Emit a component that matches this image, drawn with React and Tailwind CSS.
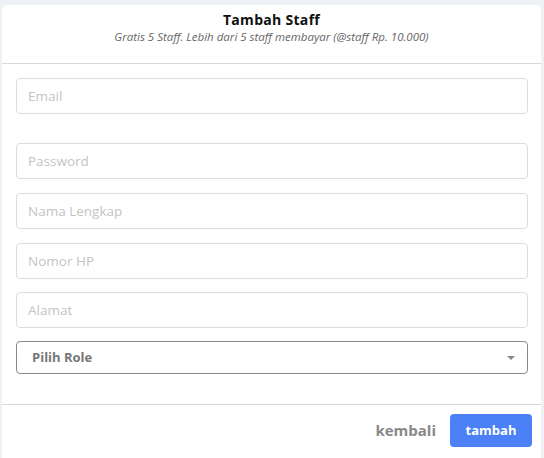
import React from "react";

const inputCls =
  "w-full h-[36px] rounded-[4px] border border-[#dcdcdc] bg-white px-[11px] text-[13.5px] text-[#333] placeholder:text-[#c4c4c4] outline-none";

export default function App() {
  return (
    <div
      className="min-h-screen bg-[#eef1f5] pl-[2px] pr-[3px] pt-[5px]"
      style={{ fontFamily: '"Open Sans", "Liberation Sans", sans-serif' }}
    >
      <div className="min-h-[460px] rounded-t-[5px] bg-white">
        <div className="flex h-[58px] flex-col items-center pt-[6px]">
          <div className="text-[14px] font-bold leading-[18px] tracking-[0.3px] text-[#111]">Tambah Staff</div>
          <div className="text-[11.5px] italic leading-[15px] text-[#666]">
            Gratis 5 Staff. Lebih dari 5 staff membayar (@staff Rp. 10.000)
          </div>
        </div>
        <div className="h-px bg-[#d9d9d9]" />
        <div className="flex flex-col pl-[14px] pr-[13px] pt-[14px]">
          <input className={inputCls + " mb-[29px]"} placeholder="Email" />
          <input className={inputCls + " mb-[14px]"} placeholder="Password" type="password" />
          <input className={inputCls + " mb-[14px]"} placeholder="Nama Lengkap" />
          <input className={inputCls + " mb-[13px]"} placeholder="Nomor HP" />
          <input className={inputCls + " mb-[13px]"} placeholder="Alamat" />
          <div className="flex h-[33px] items-center justify-between rounded-[4px] border border-[#888] pl-[15px] pr-[12px]">
            <span className="text-[13px] font-bold text-[#777]">Pilih Role</span>
            <span className="h-0 w-0 border-x-[4px] border-t-[4px] border-x-transparent border-t-[#888]" />
          </div>
        </div>
        <div className="mt-[30px] h-px bg-[#d9d9d9]" />
        <div className="flex items-center justify-end gap-[14px] pr-[9px] pt-[9px]">
          <button className="text-[15px] font-bold text-[#888]">kembali</button>
          <button className="h-[33px] w-[82px] rounded-[4px] bg-[#4b80f6] text-[13px] font-bold text-white">
            tambah
          </button>
        </div>
      </div>
    </div>
  );
}
